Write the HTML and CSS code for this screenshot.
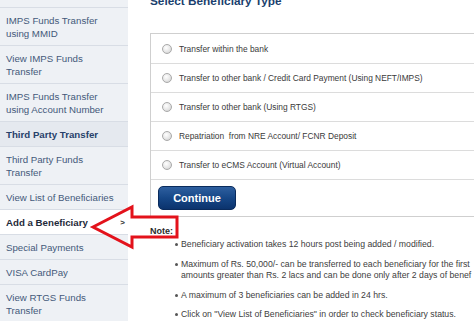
FILE: index.html
```html
<!DOCTYPE html>
<html>
<head>
<meta charset="utf-8">
<link rel="stylesheet" href="styles.css">
</head>
<body>
<div class="page">
  <nav class="sidebar">
    <div class="item stub"></div>
    <div class="item">IMPS Funds Transfer<br>using MMID</div>
    <div class="item">View IMPS Funds<br>Transfer</div>
    <div class="item">IMPS Funds Transfer<br>using Account Number</div>
    <div class="item header">Third Party Transfer</div>
    <div class="item">Third Party Funds<br>Transfer</div>
    <div class="item">View List of Beneficiaries</div>
    <div class="item active"><span>Add a Beneficiary</span><span class="chev">&gt;</span></div>
    <div class="item">Special Payments</div>
    <div class="item">VISA CardPay</div>
    <div class="item">View RTGS Funds<br>Transfer</div>
  </nav>
  <main class="content">
    <h2 class="title">Select Beneficiary Type</h2>
    <div class="options">
      <label class="opt"><span class="radio"></span>Transfer within the bank</label>
      <label class="opt"><span class="radio"></span>Transfer to other bank / Credit Card Payment (Using NEFT/IMPS)</label>
      <label class="opt"><span class="radio"></span>Transfer to other bank (Using RTGS)</label>
      <label class="opt"><span class="radio"></span>Repatriation&nbsp; from NRE Account/ FCNR Deposit</label>
      <label class="opt"><span class="radio"></span>Transfer to eCMS Account (Virtual Account)</label>
      <div class="actions"><button class="btn">Continue</button></div>
    </div>
    <div class="note">
      <div class="note-label">Note:</div>
      <ul class="note-list">
        <li><span>Beneficiary activation takes 12 hours post being added / modified.</span></li>
        <li><span>Maximum of Rs. 50,000/- can be transferred to each beneficiary for the first<br>amounts greater than Rs. 2 lacs and can be done only after 2 days of benef</span></li>
        <li><span>A maximum of 3 beneficiaries can be added in 24 hrs.</span></li>
        <li><span>Click on "View List of Beneficiaries" in order to check beneficiary status.</span></li>
      </ul>
    </div>
  </main>
</div>
<svg class="arrow" width="474" height="321" viewBox="0 0 474 321">
  <polygon points="93,227 132,207 132,217 177,217 177,237 132,237 132,247" fill="none" stroke="#e3121b" stroke-width="3" stroke-linejoin="miter"/>
</svg>
</body>
</html>
```

FILE: styles.css
```css
html, body {
  margin: 0;
  padding: 0;
  background: #ffffff;
  overflow: hidden;
  width: 474px;
  height: 321px;
}
body {
  position: relative;
  font-family: "Liberation Sans", Arial, sans-serif;
}
.page {
  display: flex;
  align-items: flex-start;
  width: 474px;
  height: 321px;
  overflow: hidden;
}
.sidebar {
  flex: none;
  width: 128px;
  background: #eef1f5;
  display: flex;
  flex-direction: column;
}
.item {
  padding: 6px 4px 5px 6px;
  font-size: 9.7px;
  line-height: 13px;
  color: #44597a;
  border-bottom: 1px solid #d8dde5;
  white-space: nowrap;
}
.item.stub {
  padding: 0;
  height: 7px;
}
.item.header {
  background: #e5e9ef;
  font-weight: bold;
  color: #27416a;
}
.item.active {
  background: #ffffff;
  font-weight: bold;
  color: #1f2a3a;
  display: flex;
  justify-content: space-between;
  align-items: center;
}
.chev {
  font-size: 8px;
  font-weight: bold;
  color: #333;
  margin-right: -1px;
}
.content {
  flex: 1;
  min-width: 0;
  margin-left: 22px;
  margin-right: -40px;
  display: flex;
  flex-direction: column;
}
.title {
  margin: -6px 0 25px 0;
  font-size: 11.8px;
  line-height: 14px;
  font-weight: bold;
  color: #1b3f6e;
  white-space: nowrap;
}
.options {
  border: 1px solid #cfcfcf;
  border-right: none;
  display: flex;
  flex-direction: column;
}
.opt {
  height: 28px;
  border-bottom: 1px solid #dcdcdc;
  display: flex;
  align-items: center;
  padding-left: 11px;
  font-size: 8.4px;
  color: #3a3a3a;
  white-space: nowrap;
}
.opt:first-child {
  padding-top: 1px;
}
.radio {
  flex: none;
  width: 8px;
  height: 8px;
  border: 1px solid #a9a9a9;
  border-radius: 50%;
  background: radial-gradient(circle at 40% 35%, #ffffff 0%, #e6e6e6 55%, #c9c9c9 100%);
  margin-right: 7px;
}
.actions {
  padding: 6px 0 6px 7px;
  display: flex;
}
.btn {
  width: 78px;
  height: 24px;
  border: 1px solid #0a2b5c;
  border-radius: 5px;
  background: linear-gradient(#2e5f9f, #164787 50%, #0b336d);
  color: #ffffff;
  font-family: "Liberation Sans", Arial, sans-serif;
  font-size: 11px;
  font-weight: bold;
  padding: 0;
  text-align: center;
}
.note {
  display: flex;
  flex-direction: column;
  padding-top: 9px;
}
.note-label {
  font-size: 9px;
  line-height: 11px;
  font-weight: bold;
  color: #2b2b2b;
}
.note-list {
  list-style: none;
  margin: 2px 0 0 0;
  padding: 0 0 0 25px;
  display: flex;
  flex-direction: column;
  gap: 8px;
}
.note-list li {
  display: flex;
  align-items: flex-start;
  font-size: 8.7px;
  line-height: 11.5px;
  color: #404040;
  white-space: nowrap;
}
.note-list li::before {
  content: "";
  flex: none;
  width: 3px;
  height: 3px;
  border-radius: 50%;
  background: #555;
  margin: 4px 3px 0 0;
}
.arrow {
  position: absolute;
  left: 0;
  top: 0;
  pointer-events: none;
}
```
